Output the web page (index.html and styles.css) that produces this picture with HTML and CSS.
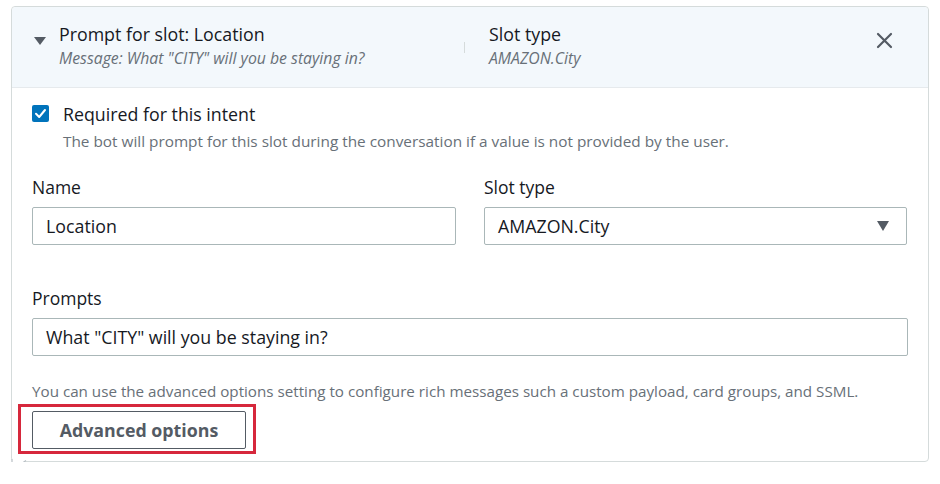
FILE: index.html
```html
<!DOCTYPE html>
<html lang="en">
<head>
<meta charset="utf-8">
<title>Prompt for slot</title>
<link rel="stylesheet" href="styles.css">
</head>
<body>
<div class="card">
  <div class="header">
    <svg class="caret" width="12" height="8" viewBox="0 0 12 8"><path d="M0 0 H12 L6 8 Z" fill="#545b64"/></svg>
    <div class="head-col head-left">
      <div class="head-title">Prompt for slot: Location</div>
      <div class="head-sub">Message: What "CITY" will you be staying in?</div>
    </div>
    <div class="divider"></div>
    <div class="head-col head-right">
      <div class="head-title">Slot type</div>
      <div class="head-sub">AMAZON.City</div>
    </div>
    <svg class="close" width="17" height="17" viewBox="0 0 17 17"><path d="M2 2 L15 15 M15 2 L2 15" stroke="#545b64" stroke-width="2.2" fill="none" stroke-linecap="round"/></svg>
  </div>
  <div class="body">
    <div class="check-row">
      <span class="checkbox"><svg width="17" height="17" viewBox="0 0 17 17"><path d="M4 8.8 L7.2 12 L13 5" stroke="#fff" stroke-width="2" fill="none" stroke-linecap="round" stroke-linejoin="round"/></svg></span>
      <div>
        <div class="check-label">Required for this intent</div>
        <div class="check-desc">The bot will prompt for this slot during the conversation if a value is not provided by the user.</div>
      </div>
    </div>
    <div class="fields">
      <div class="field">
        <div class="label">Name</div>
        <div class="input">Location</div>
      </div>
      <div class="field">
        <div class="label">Slot type</div>
        <div class="input select">AMAZON.City<svg width="12" height="10" viewBox="0 0 12 10"><path d="M0 0 H12 L6 10 Z" fill="#545b64"/></svg></div>
      </div>
    </div>
    <div class="field prompts">
      <div class="label">Prompts</div>
      <div class="input">What "CITY" will you be staying in?</div>
    </div>
    <div class="help">You can use the advanced options setting to configure rich messages such a custom payload, card groups, and SSML.</div>
    <div class="btn-wrap"><button class="btn">Advanced options</button></div>
  </div>
  <svg class="tail" width="16" height="14" viewBox="0 0 16 14"><path d="M1 0 V11 L15 1.5" fill="#fff" stroke="#b9c0c5" stroke-width="1.2"/></svg>
</div>
</body>
</html>
```
FILE: styles.css
```css
* { box-sizing: border-box; }
body {
  margin: 0;
  background: #fff;
  font-family: "Open Sans", "Noto Sans", sans-serif;
  color: #16191f;
}
.card {
  position: relative;
  margin: 6px 0 0 11px;
  width: 918px;
  border: 1px solid #d5dbdb;
  border-radius: 4px;
  background: #fff;
}
.header {
  display: flex;
  align-items: flex-start;
  background: #f3f8fc;
  border-bottom: 1px solid #e6eaed;
  border-radius: 4px 4px 0 0;
  padding: 16px 35px 16px 22px;
  height: 81px;
}
.caret { margin-top: 14px; margin-right: 13px; flex: none; }
.head-left { flex: none; width: 405px; }
.head-right { flex: 1; }
.head-title { font-size: 17.8px; line-height: 22px; }
.head-sub { font-size: 15.8px; line-height: 22px; font-style: italic; color: #687078; margin-top: 2px; }
.divider { width: 1px; height: 11px; background: #d5dbdb; margin: 19px 24px 0 0; flex: none; }
.close { margin-top: 9px; flex: none; }
.body { padding: 15px 20px 12px 20px; }
.check-row { display: flex; gap: 14px; }
.checkbox {
  flex: none;
  width: 17px; height: 17px;
  margin-top: 2px;
  background: #0073bb;
  border-radius: 2px;
  display: flex;
}
.check-label { font-size: 17.8px; line-height: 22px; }
.check-desc { font-size: 15.35px; line-height: 20px; color: #687078; margin-top: 6px; }
.fields { display: grid; grid-template-columns: 424px 423px; gap: 28px; margin-top: 25px; }
.label { font-size: 17.5px; line-height: 22px; }
.input {
  margin-top: 9px;
  height: 38px;
  border: 1px solid #aab7b8;
  border-radius: 2px;
  padding: 0 13px;
  font-size: 17.8px;
  display: flex;
  align-items: center;
  justify-content: space-between;
}
.select { padding-right: 17px; }
.prompts { margin-top: 42px; }
.help { font-size: 15.2px; line-height: 20px; color: #687078; margin-top: 25px; }
.btn-wrap { position: relative; display: inline-block; margin-top: 10px; }
.btn-wrap::after {
  content: "";
  position: absolute;
  top: -7px; bottom: -5px; left: -14px; right: -10px;
  border: 3px solid #d6283c;
}
.btn {
  display: block;
  width: 214px;
  height: 38px;
  border: 1px solid #545b64;
  border-radius: 2px;
  background: #fff;
  color: #545b64;
  font-family: inherit;
  font-size: 17.8px;
  font-weight: 700;
}
.tail { position: absolute; left: -1px; bottom: -12px; }
```
